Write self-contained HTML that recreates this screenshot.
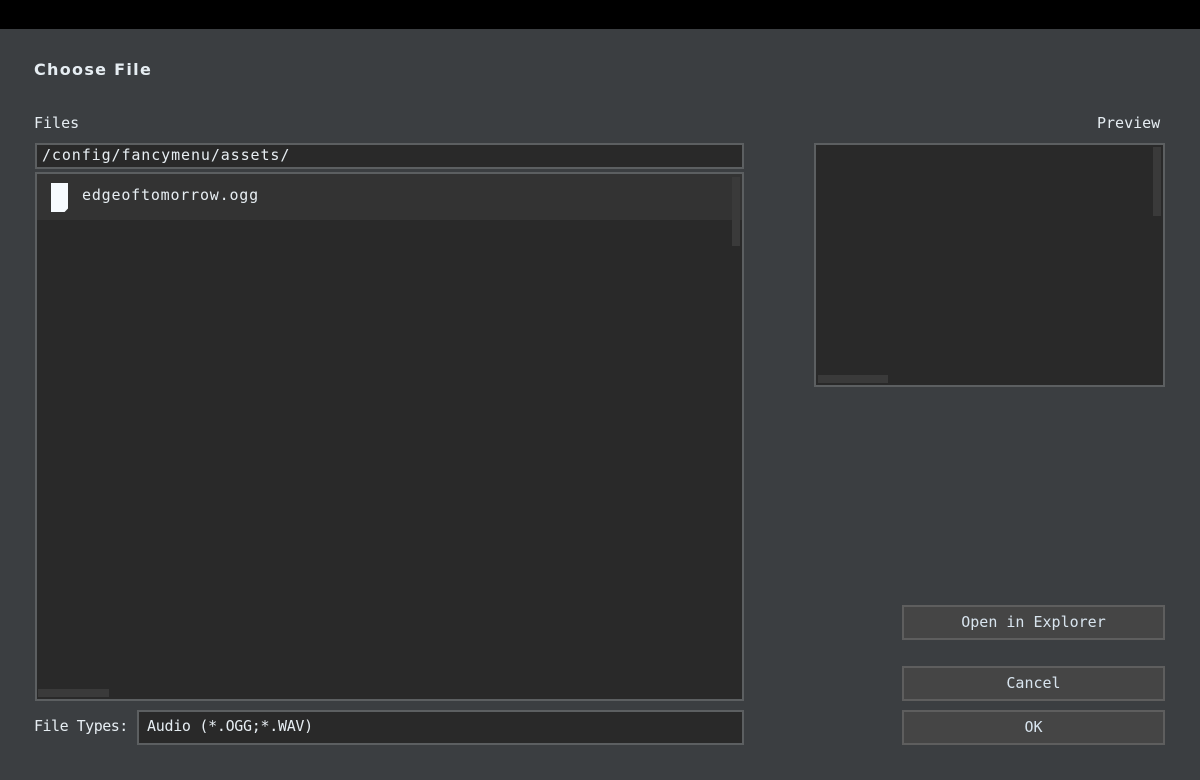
<!DOCTYPE html>
<html><head><style>
*{margin:0;padding:0;box-sizing:border-box}
body{width:1200px;height:780px;background:#3b3e41;position:relative;overflow:hidden;font-family:"DejaVu Sans Mono","Liberation Mono",monospace;color:#e6edf2;font-size:15px}
.a{position:absolute}
.box{border:2px solid #5c5f61;background:#292929}
.btn{border:2px solid #5e5e5e;background:#454545;text-align:center;line-height:30px;color:#d8e4ee;font-size:15px}
.sb{background:#3a3a3a}
</style></head><body>
<div class="a" style="left:0;top:0;width:1200px;height:29px;background:#000"></div>
<div class="a" style="left:34px;top:60px;font-weight:bold;font-size:16px;letter-spacing:1.3px;font-family:'DejaVu Sans',sans-serif">Choose File</div>
<div class="a" style="left:34px;top:114px;font-size:15px">Files</div>
<div class="a" style="left:1097px;top:114px;font-size:15px">Preview</div>
<div class="a box" style="left:35px;top:143px;width:709px;height:26px"></div>
<div class="a" style="left:42px;top:146px;font-size:15px;letter-spacing:0.9px">/config/fancymenu/assets/</div>
<div class="a box" style="left:35px;top:172px;width:709px;height:529px"></div>
<div class="a" style="left:37px;top:174px;width:705px;height:46px;background:#333333"></div>
<div class="a" style="left:51px;top:183px;width:17px;height:29px;background:#f7fbff;clip-path:polygon(0 0,100% 0,100% 88%,80% 100%,0 100%)"></div>
<div class="a" style="left:82px;top:186px;font-size:15px;letter-spacing:0.8px">edgeoftomorrow.ogg</div>
<div class="a sb" style="left:732px;top:177px;width:8px;height:69px"></div>
<div class="a sb" style="left:38px;top:689px;width:71px;height:8px"></div>
<div class="a box" style="left:814px;top:143px;width:351px;height:244px"></div>
<div class="a sb" style="left:1153px;top:147px;width:8px;height:69px"></div>
<div class="a sb" style="left:818px;top:375px;width:70px;height:8px"></div>
<div class="a" style="left:34px;top:717px;font-size:15px;letter-spacing:-0.5px">File Types:</div>
<div class="a box" style="left:137px;top:710px;width:607px;height:35px"></div>
<div class="a" style="left:147px;top:717px;font-size:15px;letter-spacing:-0.3px">Audio (*.OGG;*.WAV)</div>
<div class="a btn" style="left:902px;top:605px;width:263px;height:35px">Open in Explorer</div>
<div class="a btn" style="left:902px;top:666px;width:263px;height:35px">Cancel</div>
<div class="a btn" style="left:902px;top:710px;width:263px;height:35px">OK</div>
</body></html>
